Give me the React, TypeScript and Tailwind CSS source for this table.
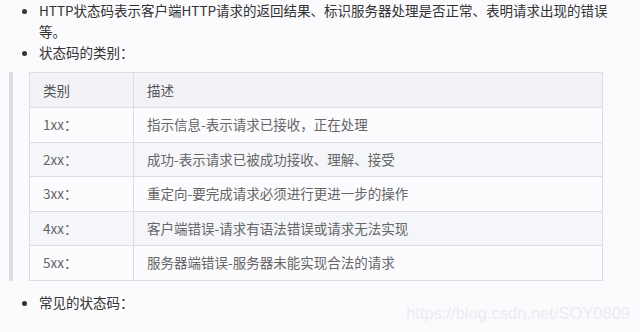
const rows = [
  { code: "1xx：", desc: "指示信息-表示请求已接收，正在处理" },
  { code: "2xx：", desc: "成功-表示请求已被成功接收、理解、接受" },
  { code: "3xx：", desc: "重定向-要完成请求必须进行更进一步的操作" },
  { code: "4xx：", desc: "客户端错误-请求有语法错误或请求无法实现" },
  { code: "5xx：", desc: "服务器端错误-服务器未能实现合法的请求" },
];

export default function App() {
  return (
    <div
      className="relative w-[640px] h-[332px] overflow-hidden bg-[#fbfbfd] text-[#333] text-[13.5px] leading-[21px]"
      style={{ fontFamily: '"Noto Sans CJK SC", "Noto Sans", sans-serif' }}
    >
      <ul className="list-disc pl-[39px] w-[612px] marker:text-[#333]">
        <li>HTTP状态码表示客户端HTTP请求的返回结果、标识服务器处理是否正常、表明请求出现的错误等。</li>
        <li>状态码的类别：</li>
      </ul>

      {/* quoted table */}
      <div className="mt-[9px] ml-[9px] pl-[16px] border-l-4 border-[#dfdfe3] w-[594px]">
        <table className="w-[574px] border-collapse text-[13.5px] text-[#666]">
          <thead>
            <tr className="h-[35px] bg-[#f2f3f7]">
              <th className="w-[104px] border border-[#dcdde2] pl-[13px] text-left font-normal text-[#555]">类别</th>
              <th className="border border-[#dcdde2] pl-[13px] text-left font-normal text-[#555]">描述</th>
            </tr>
          </thead>
          <tbody>
            {rows.map((r, i) => (
              <tr key={r.code} className={i % 2 === 1 ? "h-[34.5px] bg-[#f5f6f9]" : "h-[34.5px] bg-[#fcfcfe]"}>
                <td className="border border-[#dcdde2] pl-[13px]">{r.code}</td>
                <td className="border border-[#dcdde2] pl-[13px]">{r.desc}</td>
              </tr>
            ))}
          </tbody>
        </table>
      </div>

      <ul className="list-disc pl-[39px] mt-[11px]">
        <li>常见的状态码：</li>
      </ul>

      <div
        className="absolute right-[10px] top-[302px] text-[16.5px] leading-[22px] text-[#ebebf0]"
        style={{ fontFamily: '"Liberation Sans", Arial, sans-serif' }}
      >
        https://blog.csdn.net/SOY0809
      </div>
    </div>
  );
}
